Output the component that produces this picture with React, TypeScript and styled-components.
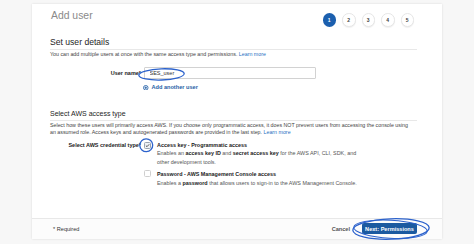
import React from 'react';
import styled, { createGlobalStyle } from 'styled-components';

const GlobalStyle = createGlobalStyle`
  html, body {
    margin: 0;
    padding: 0;
  }
  body {
    background: #f7f7f7;
    font-family: "Liberation Sans", Arial, sans-serif;
    color: #222;
  }
`;

const Page = styled.div`
  width: 474px;
  height: 244px;
  padding: 4px 0 0 32px;
  box-sizing: border-box;
  overflow: hidden;
`;

const Card = styled.div`
  width: 410px;
  height: 235px;
  background: #fff;
  box-shadow: 0 0 2px rgba(0, 0, 0, 0.12);
  display: flex;
  flex-direction: column;
`;

const Body = styled.div`
  flex: 1;
  padding: 0 25px 0 18px;
  display: flex;
  flex-direction: column;
`;

const Header = styled.div`
  display: flex;
  justify-content: space-between;
  align-items: flex-start;
  height: 30px;
  margin-right: 3px;
`;

const Title = styled.h1`
  margin: 6px 0 0 1px;
  font-size: 10.4px;
  line-height: 12px;
  font-weight: normal;
  color: #8a8a8a;
`;

const Steps = styled.div`
  display: flex;
  gap: 6px;
  margin-top: 9px;
`;

const Step = styled.div<{ $active?: boolean }>`
  width: 13.5px;
  height: 13.5px;
  box-sizing: border-box;
  border-radius: 50%;
  display: flex;
  align-items: center;
  justify-content: center;
  font-size: 5px;
  font-weight: bold;
  background: ${p => (p.$active ? '#1b5fae' : '#fff')};
  color: ${p => (p.$active ? '#fff' : '#444')};
  border: ${p => (p.$active ? 'none' : '1px solid #e6e6e6')};
  box-shadow: ${p => (p.$active ? 'none' : '0 1px 1px rgba(0,0,0,0.06)')};
`;

const SectionTitle = styled.h2<{ $size: number; $top: number; $pad: number }>`
  margin: ${p => p.$top}px 0 0;
  padding-bottom: ${p => p.$pad}px;
  font-size: ${p => p.$size}px;
  line-height: ${p => p.$size + 2.5}px;
  font-weight: normal;
  color: #1e1e1e;
  border-bottom: 1px solid #e8e8e8;
`;

const Desc = styled.p<{ $top: number }>`
  margin: ${p => p.$top}px 0 0;
  font-size: 5.3px;
  line-height: 6.8px;
  color: #444;
  white-space: nowrap;
`;

const Link = styled.a`
  color: #1f6fbf;
  text-decoration: none;
`;

const Row = styled.div<{ $top: number }>`
  display: grid;
  grid-template-columns: 91px 1fr;
  column-gap: 2.5px;
  align-items: start;
  margin-top: ${p => p.$top}px;
`;

const Label = styled.label<{ $lh: number }>`
  text-align: right;
  font-weight: bold;
  font-size: 5.5px;
  line-height: ${p => p.$lh}px;
  color: #222;
  white-space: nowrap;
`;

const InputWrap = styled.div`
  position: relative;
  width: 172px;
`;

const TextInput = styled.input`
  display: block;
  width: 100%;
  height: 12px;
  box-sizing: border-box;
  border: 1px solid #d2d2d2;
  border-radius: 1px;
  padding: 0 5px;
  font-family: inherit;
  font-size: 5.5px;
  color: #333;
  outline: none;
`;

const AddAnother = styled.div`
  display: flex;
  align-items: center;
  gap: 3px;
  margin-top: 4px;
  padding-left: 93px;
  font-size: 5.6px;
  line-height: 8px;
  font-weight: bold;
  color: #1e5ea6;
`;

const Options = styled.div`
  display: flex;
  flex-direction: column;
`;

const Option = styled.div<{ $top: number }>`
  display: grid;
  grid-template-columns: 7px 1fr;
  column-gap: 6.5px;
  margin-top: ${p => p.$top}px;
`;

const BoxCell = styled.div`
  position: relative;
  height: 8px;
  display: flex;
  align-items: center;
`;

const Checkbox = styled.span<{ $checked?: boolean }>`
  width: 7px;
  height: 7px;
  box-sizing: border-box;
  border: 1px solid ${p => (p.$checked ? '#9aa4b0' : '#cfcfcf')};
  border-radius: 1.5px;
  background: ${p => (p.$checked ? '#eef1f5' : '#fff')};
  display: flex;
  align-items: center;
  justify-content: center;
`;

const OptionTitle = styled.div`
  font-size: 5.4px;
  line-height: 8px;
  font-weight: bold;
  color: #222;
  white-space: nowrap;
`;

const OptionDesc = styled.div<{ $top: number }>`
  margin-top: ${p => p.$top}px;
  font-size: 5.4px;
  line-height: 8.2px;
  color: #555;
  white-space: nowrap;

  b {
    color: #222;
  }
`;

const Footer = styled.div`
  height: 21px;
  box-sizing: border-box;
  border-top: 1px solid #e8e8e8;
  background: #fcfcfc;
  display: flex;
  align-items: center;
  padding: 0 25px 1px 21px;
`;

const Required = styled.span`
  flex: 1;
  font-size: 5.6px;
  color: #333;
`;

const Cancel = styled.span`
  font-size: 5.6px;
  font-weight: bold;
  color: #555;
  margin-right: 12px;
`;

const ButtonWrap = styled.div`
  position: relative;
`;

const PrimaryButton = styled.button`
  display: block;
  width: 55px;
  height: 11px;
  padding: 0;
  border: none;
  border-radius: 2px;
  background: #1b5aa0;
  color: #fff;
  font-family: inherit;
  font-size: 5.6px;
  font-weight: bold;
`;

const Mark = styled.svg<{ $left: number; $top: number }>`
  position: absolute;
  left: ${p => p.$left}px;
  top: ${p => p.$top}px;
  overflow: visible;
  pointer-events: none;
`;

interface ScribbleProps {
  left: number;
  top: number;
  w: number;
  h: number;
  loops?: number;
}

const Scribble = ({ left, top, w, h, loops = 1 }: ScribbleProps) => (
  <Mark $left={left} $top={top} width={w} height={h} viewBox={`0 0 ${w} ${h}`}>
    <ellipse
      cx={w / 2}
      cy={h / 2}
      rx={w / 2 - 0.8}
      ry={h / 2 - 0.8}
      fill="none"
      stroke="#2c62cc"
      strokeWidth={1.3}
      transform={`rotate(-2 ${w / 2} ${h / 2})`}
    />
    {loops > 1 && (
      <ellipse
        cx={w / 2 - 0.5}
        cy={h / 2 + 0.3}
        rx={w / 2 - 2.2}
        ry={h / 2 - 2}
        fill="none"
        stroke="#2c62cc"
        strokeWidth={1}
        transform={`rotate(3 ${w / 2} ${h / 2})`}
      />
    )}
  </Mark>
);

const PlusCircle = () => (
  <svg width="5.5" height="5.5" viewBox="0 0 12 12">
    <circle cx="6" cy="6" r="5" fill="none" stroke="#1e5ea6" strokeWidth="1.8" />
    <path d="M6 3.2v5.6M3.2 6h5.6" stroke="#1e5ea6" strokeWidth="1.8" />
  </svg>
);

const Check = () => (
  <svg width="5" height="5" viewBox="0 0 10 10">
    <path d="M1.8 5.2l2.2 2.2 4.4-4.8" fill="none" stroke="#333" strokeWidth="1.6" />
  </svg>
);

export default function App() {
  return (
    <>
      <GlobalStyle />
      <Page>
        <Card>
          <Body>
            <Header>
              <Title>Add user</Title>
              <Steps>
                {[1, 2, 3, 4, 5].map(n => (
                  <Step key={n} $active={n === 1}>{n}</Step>
                ))}
              </Steps>
            </Header>

            <SectionTitle $size={8.6} $top={3.2} $pad={1}>Set user details</SectionTitle>
            <Desc $top={1}>
              You can add multiple users at once with the same access type and permissions. <Link>Learn more</Link>
            </Desc>

            <Row $top={9.3}>
              <Label $lh={12}>User name*</Label>
              <InputWrap>
                <TextInput readOnly value="SES_user" />
                <Scribble left={-6} top={0.5} w={47} h={12.8} />
              </InputWrap>
            </Row>
            <AddAnother>
              <PlusCircle />
              Add another user
            </AddAnother>

            <SectionTitle $size={7} $top={17.5} $pad={1.5}>Select AWS access type</SectionTitle>
            <Desc $top={1.4}>
              Select how these users will primarily access AWS. If you choose only programmatic access, it does NOT prevent users from accessing the console using
              <br />
              an assumed role. Access keys and autogenerated passwords are provided in the last step. <Link>Learn more</Link>
            </Desc>

            <Row $top={5.2}>
              <Label $lh={8}>Select AWS credential type*</Label>
              <Options>
                <Option $top={0}>
                  <BoxCell>
                    <Checkbox $checked>
                      <Check />
                    </Checkbox>
                    <Scribble left={-4.8} top={-2.8} w={14.5} h={14.5} />
                  </BoxCell>
                  <div>
                    <OptionTitle>Access key - Programmatic access</OptionTitle>
                    <OptionDesc $top={0.4}>
                      Enables an <b>access key ID</b> and <b>secret access key</b> for the AWS API, CLI, SDK, and
                      <br />
                      other development tools.
                    </OptionDesc>
                  </div>
                </Option>
                <Option $top={4}>
                  <BoxCell>
                    <Checkbox />
                  </BoxCell>
                  <div>
                    <OptionTitle>Password - AWS Management Console access</OptionTitle>
                    <OptionDesc $top={1}>
                      Enables a <b>password</b> that allows users to sign-in to the AWS Management Console.
                    </OptionDesc>
                  </div>
                </Option>
              </Options>
            </Row>
          </Body>

          <Footer>
            <Required>* Required</Required>
            <Cancel>Cancel</Cancel>
            <ButtonWrap>
              <PrimaryButton>Next: Permissions</PrimaryButton>
              <Scribble left={-10} top={-5.5} w={78} h={22} loops={2} />
            </ButtonWrap>
          </Footer>
        </Card>
      </Page>
    </>
  );
}
